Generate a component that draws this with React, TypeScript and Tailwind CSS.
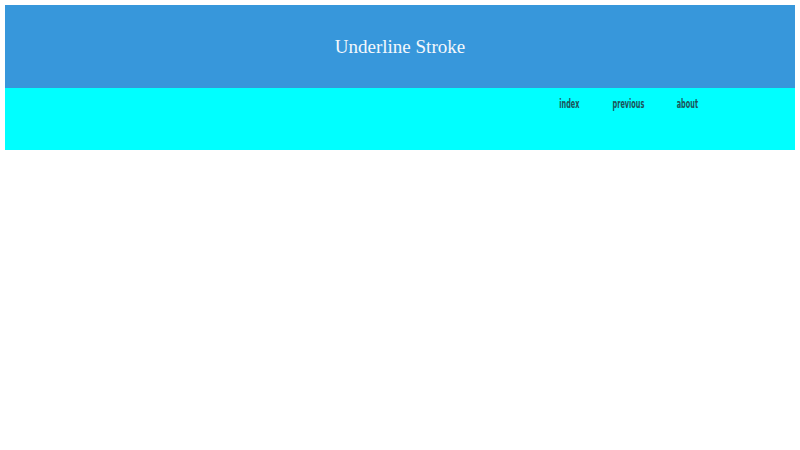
export default function App() {
  return (
    <div className="p-[5px] bg-white min-h-[450px]">
      <header className="h-[83px] bg-[#3797db] flex items-center justify-center">
        <h1 className="text-[19px] text-[#f4f8fc] font-['Liberation_Serif',serif] leading-none">Underline Stroke</h1>
      </header>
      <nav className="h-[62px] bg-[#00ffff] flex justify-end pr-[78px] pt-[8px]">
        <ul className="flex h-[16px]">
          {["index", "previous", "about"].map((t) => (
            <li key={t} className="w-[59px] flex justify-center items-start">
              <a className="text-[12.5px] leading-[16px] text-[#1d5259] font-['DejaVu_Sans_Condensed',sans-serif] font-bold inline-block scale-x-[0.58] origin-center whitespace-nowrap">
                {t}
              </a>
            </li>
          ))}
        </ul>
      </nav>
    </div>
  );
}
